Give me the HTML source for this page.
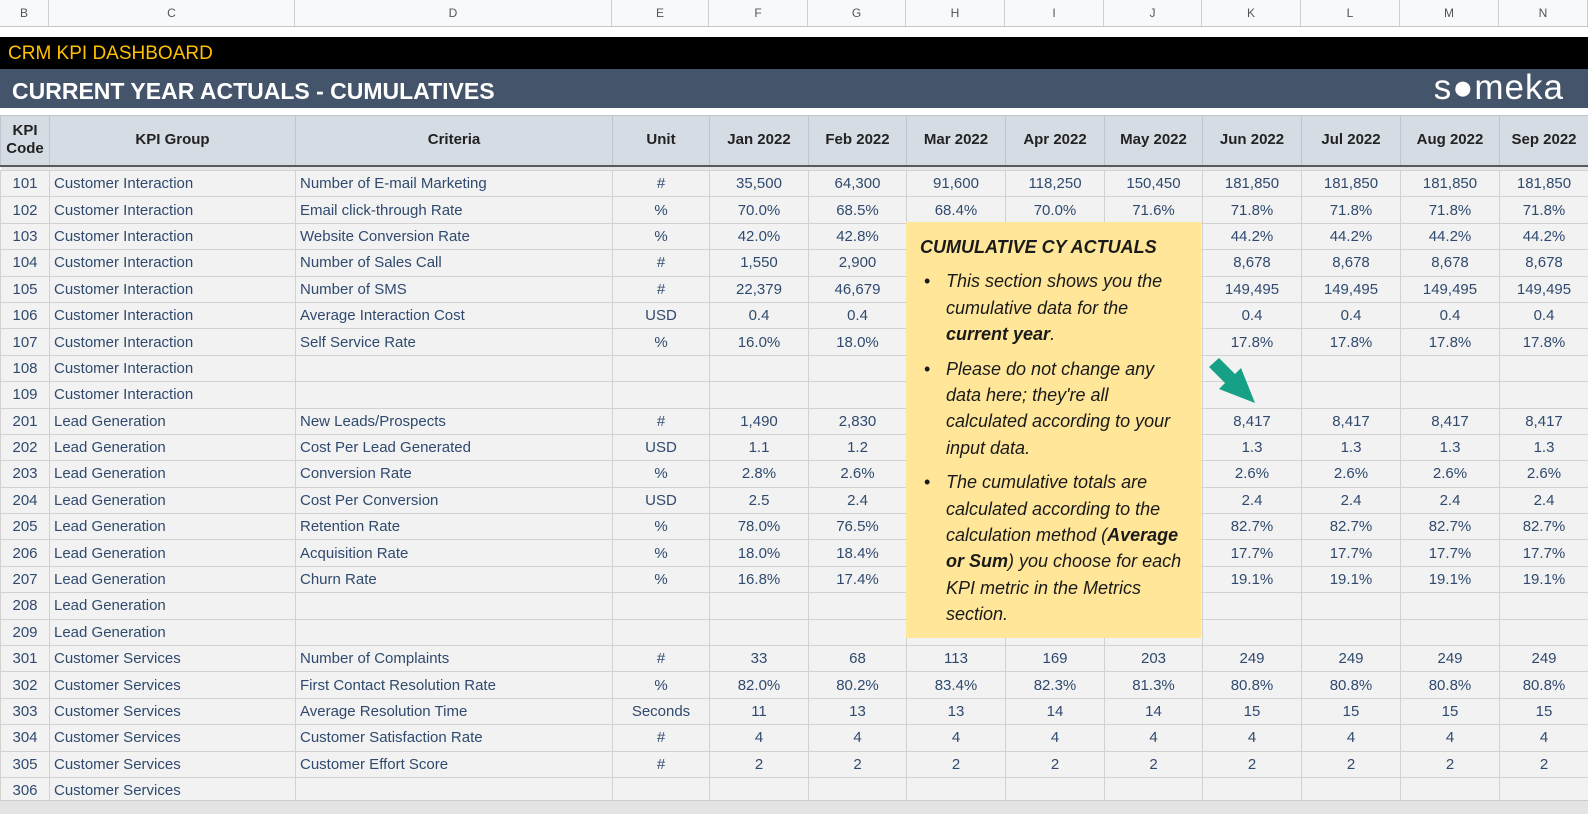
<!DOCTYPE html>
<html style="overflow:hidden"><head><meta charset="utf-8"><style>
*{margin:0;padding:0;box-sizing:border-box}
html,body{width:1588px;height:814px;overflow:hidden}
body{background:#fff;font-family:"Liberation Sans",sans-serif;position:relative}
.colh{position:absolute;top:0;left:0;height:27px;width:1588px;background:#f8f9fa;border-bottom:1px solid #c4c7c5;display:flex}
.colh div{flex:none;border-right:1px solid #d0d0d0;text-align:center;line-height:27px;font-size:12px;color:#555}
.black{position:absolute;top:37px;left:0;width:1588px;height:32px;background:#000;color:#ffc000;font-size:19px;line-height:33px;padding-left:8px}
.slate{position:absolute;top:69px;left:0;width:1588px;height:39px;background:#44546a;color:#fff;font-size:23px;font-weight:bold;line-height:44px;padding-left:12px}
.logo{position:absolute;right:24px;top:-2px;font-size:35px;font-weight:normal;line-height:42px;letter-spacing:1px}
table{position:absolute;left:0;top:115px;border-collapse:collapse;table-layout:fixed;width:1588px}
th{background:#d6dce4;height:50px;font-size:15px;color:#222;border:1px solid #bfc5cc;border-bottom:2px solid #5a5a5a;line-height:18px}
tr.r{height:26.4px}
td{background:#f2f2f2;font-size:15px;color:#2f4a6e;border:1px solid #d2d2d2;text-align:center;white-space:nowrap;overflow:hidden;padding:0}
td.l{text-align:left;padding-left:4px}
tr.gap td{height:5px;background:#e6e6e6;border:none}
.call{position:absolute;left:906px;top:222px;width:295px;height:416px;background:#ffe699;color:#1a1a1a;font-style:italic;font-size:18px;line-height:26.4px;padding:12px 10px 0 14px}
.call ul{list-style:none}
.call li{position:relative;padding-left:26px;margin-top:8px}
.call li:before{content:"•";position:absolute;left:4px;font-style:normal}
.bot{position:absolute;left:0;top:800px;width:1588px;height:14px;background:#e4e4e4;border-top:1px solid #ccc}
</style></head><body>
<div class="colh">
<div style="width:49px">B</div><div style="width:246px">C</div><div style="width:317px">D</div><div style="width:97px">E</div><div style="width:99px">F</div><div style="width:98px">G</div><div style="width:99px">H</div><div style="width:99px">I</div><div style="width:98px">J</div><div style="width:99px">K</div><div style="width:99px">L</div><div style="width:99px">M</div><div style="width:89px">N</div>
</div>
<div class="black">CRM KPI DASHBOARD</div>
<div class="slate">CURRENT YEAR ACTUALS - CUMULATIVES<span class="logo">s<span style="color:#fff">●</span>meka</span></div>
<table>
<colgroup><col style="width:49px"><col style="width:246px"><col style="width:317px"><col style="width:97px"><col style="width:99px"><col style="width:98px"><col style="width:99px"><col style="width:99px"><col style="width:98px"><col style="width:99px"><col style="width:99px"><col style="width:99px"><col style="width:89px"></colgroup>
<tr><th>KPI<br>Code</th><th>KPI Group</th><th>Criteria</th><th>Unit</th><th>Jan 2022</th><th>Feb 2022</th><th>Mar 2022</th><th>Apr 2022</th><th>May 2022</th><th>Jun 2022</th><th>Jul 2022</th><th>Aug 2022</th><th>Sep 2022</th></tr>
<tr class="gap"><td colspan="13"></td></tr>
<tr class="r"><td>101</td><td class="l">Customer Interaction</td><td class="l">Number of E-mail Marketing</td><td>#</td><td>35,500</td><td>64,300</td><td>91,600</td><td>118,250</td><td>150,450</td><td>181,850</td><td>181,850</td><td>181,850</td><td>181,850</td></tr>
<tr class="r"><td>102</td><td class="l">Customer Interaction</td><td class="l">Email click-through Rate</td><td>%</td><td>70.0%</td><td>68.5%</td><td>68.4%</td><td>70.0%</td><td>71.6%</td><td>71.8%</td><td>71.8%</td><td>71.8%</td><td>71.8%</td></tr>
<tr class="r"><td>103</td><td class="l">Customer Interaction</td><td class="l">Website Conversion Rate</td><td>%</td><td>42.0%</td><td>42.8%</td><td></td><td></td><td></td><td>44.2%</td><td>44.2%</td><td>44.2%</td><td>44.2%</td></tr>
<tr class="r"><td>104</td><td class="l">Customer Interaction</td><td class="l">Number of Sales Call</td><td>#</td><td>1,550</td><td>2,900</td><td></td><td></td><td></td><td>8,678</td><td>8,678</td><td>8,678</td><td>8,678</td></tr>
<tr class="r"><td>105</td><td class="l">Customer Interaction</td><td class="l">Number of SMS</td><td>#</td><td>22,379</td><td>46,679</td><td></td><td></td><td></td><td>149,495</td><td>149,495</td><td>149,495</td><td>149,495</td></tr>
<tr class="r"><td>106</td><td class="l">Customer Interaction</td><td class="l">Average Interaction Cost</td><td>USD</td><td>0.4</td><td>0.4</td><td></td><td></td><td></td><td>0.4</td><td>0.4</td><td>0.4</td><td>0.4</td></tr>
<tr class="r"><td>107</td><td class="l">Customer Interaction</td><td class="l">Self Service Rate</td><td>%</td><td>16.0%</td><td>18.0%</td><td></td><td></td><td></td><td>17.8%</td><td>17.8%</td><td>17.8%</td><td>17.8%</td></tr>
<tr class="r"><td>108</td><td class="l">Customer Interaction</td><td></td><td></td><td></td><td></td><td></td><td></td><td></td><td></td><td></td><td></td><td></td></tr>
<tr class="r"><td>109</td><td class="l">Customer Interaction</td><td></td><td></td><td></td><td></td><td></td><td></td><td></td><td></td><td></td><td></td><td></td></tr>
<tr class="r"><td>201</td><td class="l">Lead Generation</td><td class="l">New Leads/Prospects</td><td>#</td><td>1,490</td><td>2,830</td><td></td><td></td><td></td><td>8,417</td><td>8,417</td><td>8,417</td><td>8,417</td></tr>
<tr class="r"><td>202</td><td class="l">Lead Generation</td><td class="l">Cost Per Lead Generated</td><td>USD</td><td>1.1</td><td>1.2</td><td></td><td></td><td></td><td>1.3</td><td>1.3</td><td>1.3</td><td>1.3</td></tr>
<tr class="r"><td>203</td><td class="l">Lead Generation</td><td class="l">Conversion Rate</td><td>%</td><td>2.8%</td><td>2.6%</td><td></td><td></td><td></td><td>2.6%</td><td>2.6%</td><td>2.6%</td><td>2.6%</td></tr>
<tr class="r"><td>204</td><td class="l">Lead Generation</td><td class="l">Cost Per Conversion</td><td>USD</td><td>2.5</td><td>2.4</td><td></td><td></td><td></td><td>2.4</td><td>2.4</td><td>2.4</td><td>2.4</td></tr>
<tr class="r"><td>205</td><td class="l">Lead Generation</td><td class="l">Retention Rate</td><td>%</td><td>78.0%</td><td>76.5%</td><td></td><td></td><td></td><td>82.7%</td><td>82.7%</td><td>82.7%</td><td>82.7%</td></tr>
<tr class="r"><td>206</td><td class="l">Lead Generation</td><td class="l">Acquisition Rate</td><td>%</td><td>18.0%</td><td>18.4%</td><td></td><td></td><td></td><td>17.7%</td><td>17.7%</td><td>17.7%</td><td>17.7%</td></tr>
<tr class="r"><td>207</td><td class="l">Lead Generation</td><td class="l">Churn Rate</td><td>%</td><td>16.8%</td><td>17.4%</td><td></td><td></td><td></td><td>19.1%</td><td>19.1%</td><td>19.1%</td><td>19.1%</td></tr>
<tr class="r"><td>208</td><td class="l">Lead Generation</td><td></td><td></td><td></td><td></td><td></td><td></td><td></td><td></td><td></td><td></td><td></td></tr>
<tr class="r"><td>209</td><td class="l">Lead Generation</td><td></td><td></td><td></td><td></td><td></td><td></td><td></td><td></td><td></td><td></td><td></td></tr>
<tr class="r"><td>301</td><td class="l">Customer Services</td><td class="l">Number of Complaints</td><td>#</td><td>33</td><td>68</td><td>113</td><td>169</td><td>203</td><td>249</td><td>249</td><td>249</td><td>249</td></tr>
<tr class="r"><td>302</td><td class="l">Customer Services</td><td class="l">First Contact Resolution Rate</td><td>%</td><td>82.0%</td><td>80.2%</td><td>83.4%</td><td>82.3%</td><td>81.3%</td><td>80.8%</td><td>80.8%</td><td>80.8%</td><td>80.8%</td></tr>
<tr class="r"><td>303</td><td class="l">Customer Services</td><td class="l">Average Resolution Time</td><td>Seconds</td><td>11</td><td>13</td><td>13</td><td>14</td><td>14</td><td>15</td><td>15</td><td>15</td><td>15</td></tr>
<tr class="r"><td>304</td><td class="l">Customer Services</td><td class="l">Customer Satisfaction Rate</td><td>#</td><td>4</td><td>4</td><td>4</td><td>4</td><td>4</td><td>4</td><td>4</td><td>4</td><td>4</td></tr>
<tr class="r"><td>305</td><td class="l">Customer Services</td><td class="l">Customer Effort Score</td><td>#</td><td>2</td><td>2</td><td>2</td><td>2</td><td>2</td><td>2</td><td>2</td><td>2</td><td>2</td></tr>
<tr class="r"><td>306</td><td class="l">Customer Services</td><td></td><td></td><td></td><td></td><td></td><td></td><td></td><td></td><td></td><td></td><td></td></tr>
</table>
<div class="call">
<div style="font-weight:bold">CUMULATIVE CY ACTUALS</div>
<ul>
<li>This section shows you the cumulative data for the <b>current year</b>.</li>
<li>Please do not change any data here; they're all calculated according to your input data.</li>
<li>The cumulative totals are calculated according to the calculation method (<b>Average or Sum</b>) you choose for each KPI metric in the Metrics section.</li>
</ul>
</div>
<svg style="position:absolute;left:1195px;top:355px" width="70" height="60"><path d="M14 12 L30 28 L24 34 L60 48 L46 13 L40 19 L24 3 Z" fill="#16a085"/></svg>
<div class="bot"></div>
</body></html>
